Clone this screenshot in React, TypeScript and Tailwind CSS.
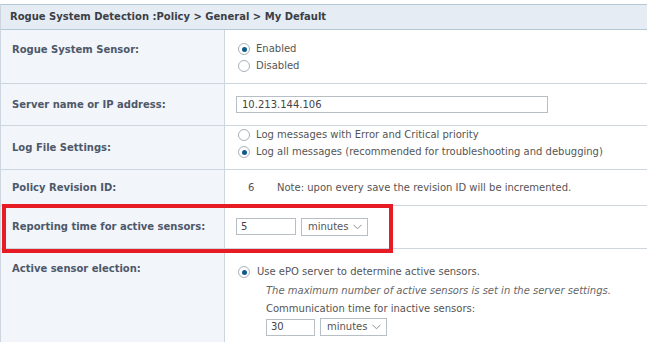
import React from 'react';

const font = { fontFamily: '"DejaVu Sans", Verdana, sans-serif' };

function Radio({ checked }: { checked?: boolean }) {
  return (
    <span className="inline-flex h-[12px] w-[12px] shrink-0 items-center justify-center rounded-full border border-[#a9b1ba] bg-white">
      {checked && <span className="h-[5px] w-[5px] rounded-full bg-[#0f5a8c]" />}
    </span>
  );
}

function Select({ className = '' }: { className?: string }) {
  return (
    <div className={`flex h-[18px] items-center gap-[5px] border border-[#b8bec5] bg-white pl-[6px] pr-[5px] text-[#555] ${className}`}>
      <span>minutes</span>
      <svg width="9" height="6" viewBox="0 0 9 6" fill="none">
        <path d="M0.5 0.8L4.5 4.8L8.5 0.8" stroke="#8a9199" strokeWidth="1" />
      </svg>
    </div>
  );
}

function Row({ label, children, top, className = '', contentClass = 'justify-center' }: { label: string; children: React.ReactNode; top?: boolean; className?: string; contentClass?: string }) {
  return (
    <div className={`grid grid-cols-[224px_1fr] border-b border-[#cdd6df] ${className}`}>
      <div className={`flex border-r border-[#cdd6df] bg-[#f2f5f9] pl-[11px] font-bold text-[#4d586a] ${top ? 'items-start pt-[12px]' : 'items-center'}`}>
        {label}
      </div>
      <div className={`flex flex-col pl-[13px] ${contentClass}`}>{children}</div>
    </div>
  );
}

export default function App() {
  return (
    <div className="h-[342px] w-[647px] overflow-hidden bg-white pt-[4px] text-[10px] leading-[16px]" style={font}>
      <div className="relative border-l border-[#cdd6df]">
        <div className="flex h-[26px] items-center border-y border-[#b6c7d4] bg-[#e6ecf4] pl-[9px] font-bold text-[#3b3f45]">
          Rogue System Detection :Policy &gt; General &gt; My Default
        </div>

        <Row label="Rogue System Sensor:" top className="h-[54px]" contentClass="justify-start pt-[11px]">
          <div className="flex flex-col text-[#555]">
            <div className="flex items-center gap-[6px]">
              <Radio checked />
              <span>Enabled</span>
            </div>
            <div className="mt-[1px] flex items-center gap-[6px]">
              <Radio />
              <span>Disabled</span>
            </div>
          </div>
        </Row>

        <Row label="Server name or IP address:" className="h-[42px]">
          <div className="ml-[-2px] flex h-[17px] w-[312px] items-center border border-[#b8bec5] pl-[5px] text-[#444]">
            10.213.144.106
          </div>
        </Row>

        <Row label="Log File Settings:" className="h-[44px]" contentClass="justify-start pt-[1px]">
          <div className="flex flex-col text-[#555]">
            <div className="flex items-center gap-[6px]">
              <Radio />
              <span>Log messages with Error and Critical priority</span>
            </div>
            <div className="mt-[1px] flex items-center gap-[6px]">
              <Radio checked />
              <span>Log all messages (recommended for troubleshooting and debugging)</span>
            </div>
          </div>
        </Row>

        <Row label="Policy Revision ID:" className="h-[36px]">
          <div className="flex items-center pl-[10px] pt-[1px] text-[#555]">
            <span className="w-[29px]">6</span>
            <span>Note: upon every save the revision ID will be incremented.</span>
          </div>
        </Row>

        <div className="relative">
          <Row label="Reporting time for active sensors:" className="h-[43px]">
            <div className="ml-[-2px] mt-[-1px] flex items-center gap-[5px]">
              <div className="flex h-[17px] w-[60px] items-center border border-[#b8bec5] pl-[4px] text-[#444]">5</div>
              <Select />
            </div>
          </Row>
          <div className="pointer-events-none absolute left-[1px] top-[-2px] h-[49px] w-[391px] border-[4px] border-[#e61b23]" />
        </div>

        <Row label="Active sensor election:" top className="h-[100px]" contentClass="justify-start pt-[15px]">
          <div className="flex flex-col text-[#555]">
            <div className="flex items-center gap-[7px]">
              <Radio checked />
              <span>Use ePO server to determine active sensors.</span>
            </div>
            <div className="ml-[28px] mt-[3px] italic text-[#666]">
              The maximum number of active sensors is set in the server settings.
            </div>
            <div className="ml-[28px] mt-[2px]">Communication time for inactive sensors:</div>
            <div className="ml-[28px] mt-[1px] flex items-center gap-[5px]">
              <div className="flex h-[17px] w-[49px] items-center border border-[#b8bec5] pl-[4px] text-[#444]">30</div>
              <Select />
            </div>
          </div>
        </Row>
      </div>
    </div>
  );
}
